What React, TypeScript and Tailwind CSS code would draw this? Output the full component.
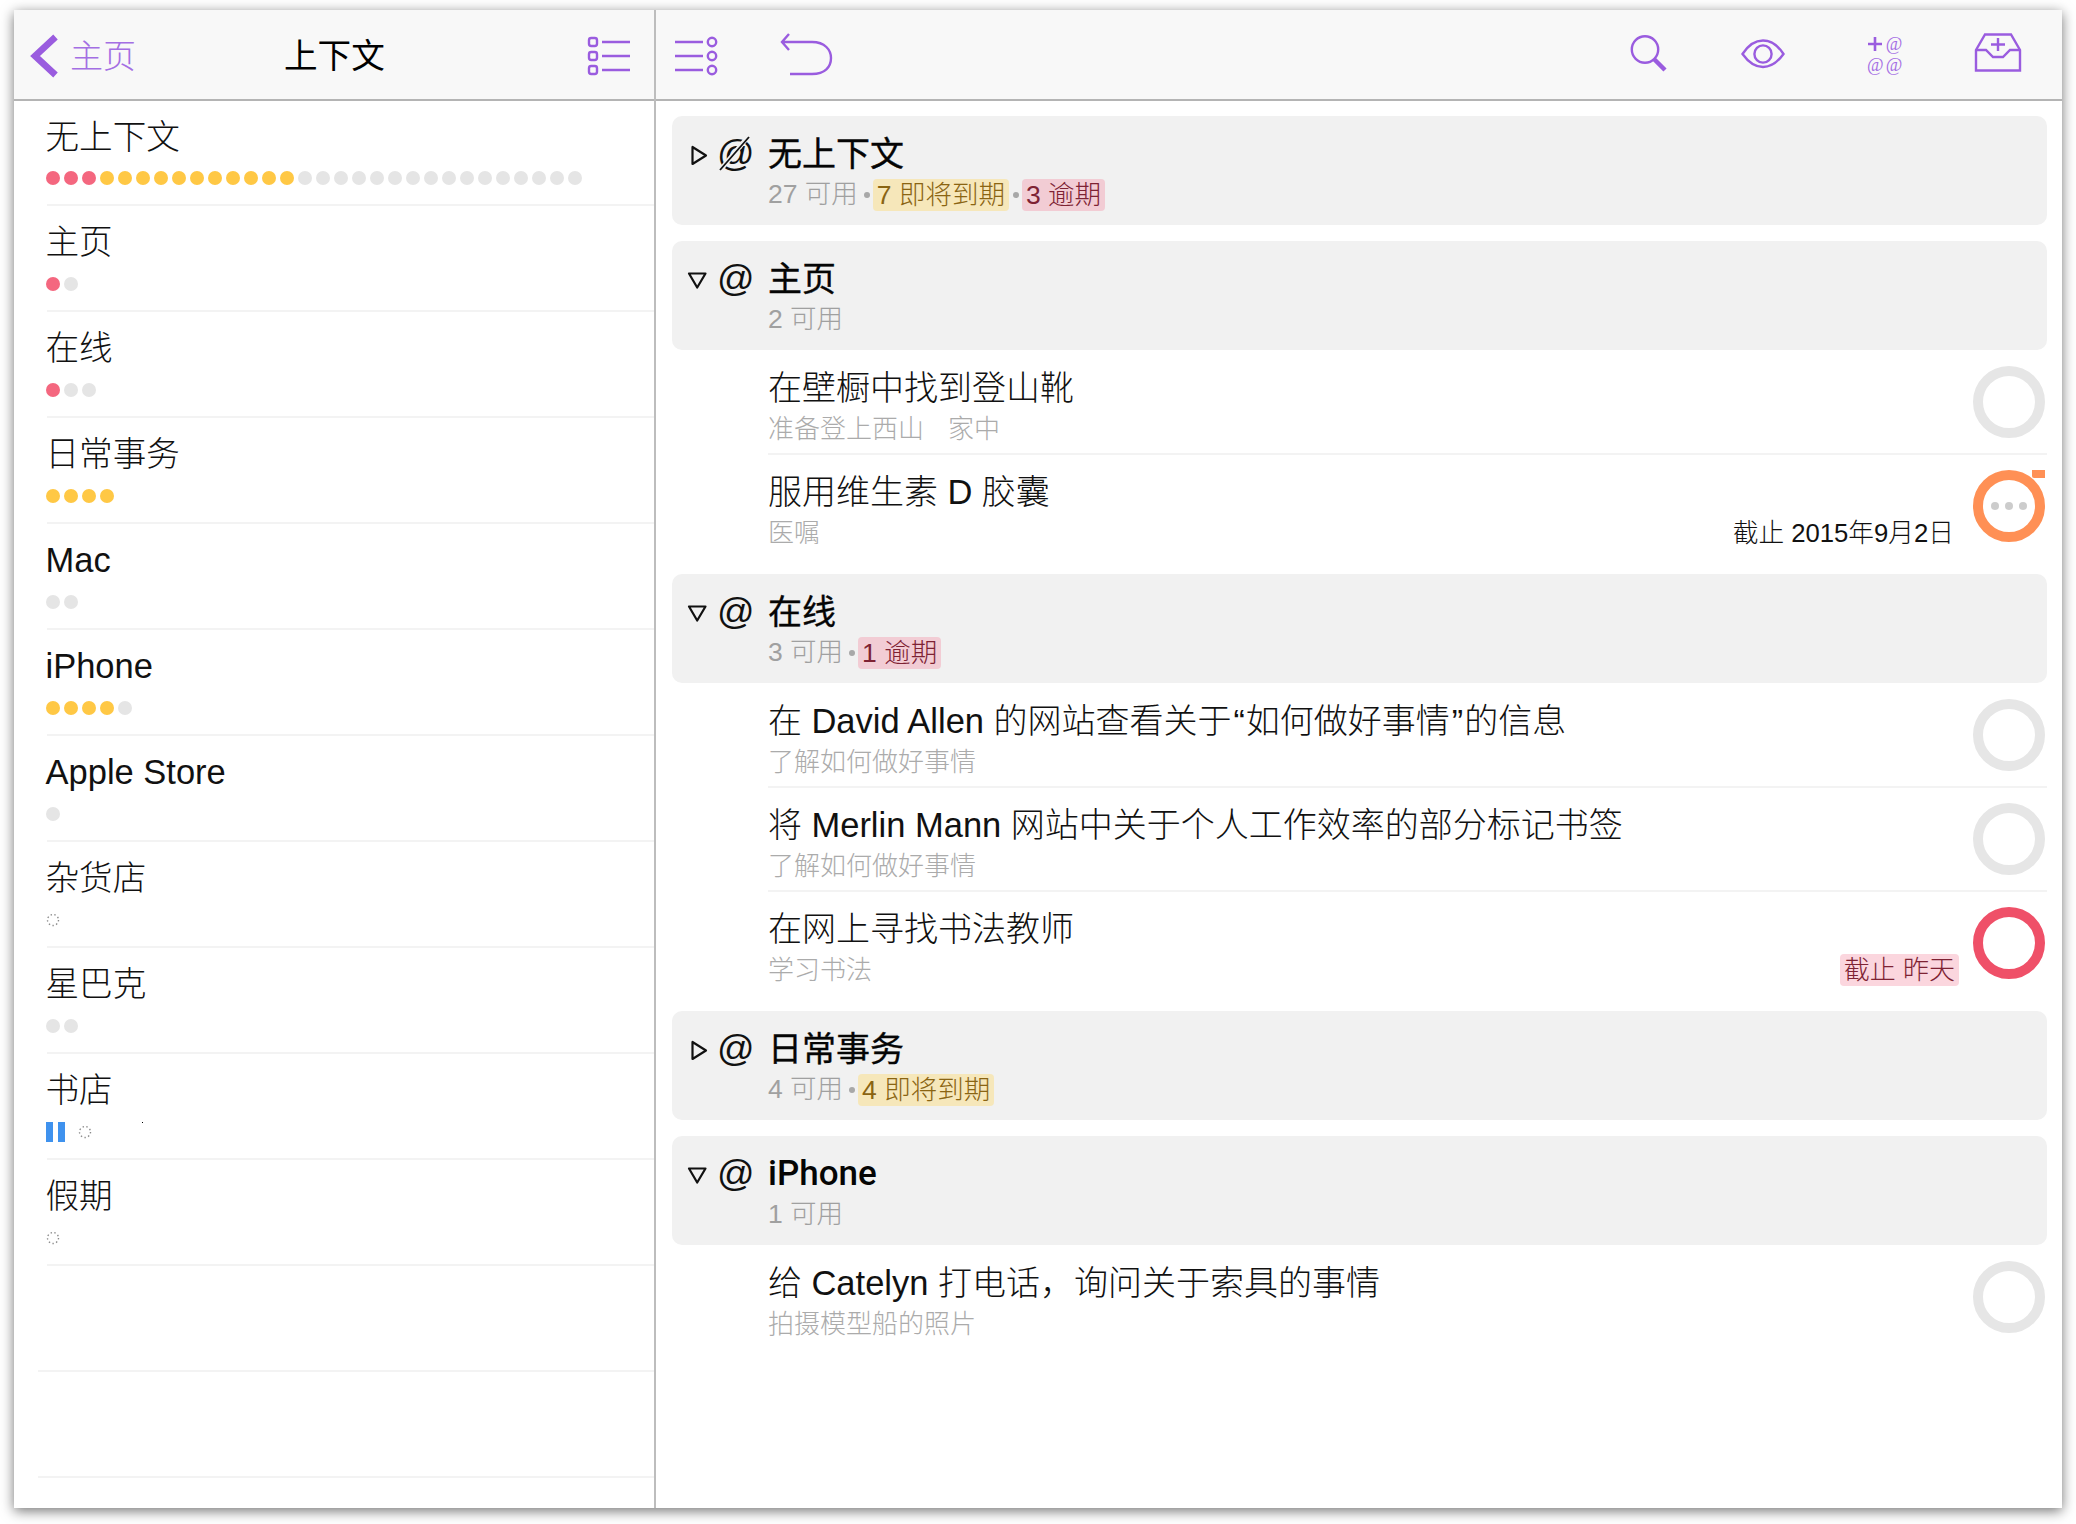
import React from "react";

const P = "#9a5cdf";

function DottedCircle() {
  return (
    <svg width="14" height="14" viewBox="0 0 14 14">
      <circle cx="7" cy="7" r="5.5" fill="none" stroke="#8a8a8a" strokeWidth="1.4" strokeDasharray="1.4 2.4" />
    </svg>
  );
}

function Dots({ r = 0, y = 0, g = 0 }: { r?: number; y?: number; g?: number }) {
  const list = [
    ...Array(r).fill("r"),
    ...Array(y).fill("y"),
    ...Array(g).fill("g"),
  ];
  return (
    <div className="flex gap-[4px] ml-[-1px]">
      {list.map((c, i) => (
        <span
          key={i}
          className={
            "w-[14px] h-[14px] rounded-full " +
            (c === "r" ? "bg-[#f4677f]" : c === "y" ? "bg-[#ffc845]" : "bg-[#e5e5e5]")
          }
        />
      ))}
    </div>
  );
}

function SideRow({ name, children, first, latin }: { name: string; children?: React.ReactNode; first?: boolean; latin?: boolean }) {
  return (
    <div className={"ml-[33px] border-b-2 border-[#f3f3f3] relative " + (first ? "h-[105px]" : "h-[106px]")}>
      <div
        className={
          "ml-[-1.5px] leading-[40px] text-[#111] " +
          (latin ? "text-[34.5px] pt-[16px] h-[57px]" : first ? "text-[33.6px] pt-[16.5px] h-[56px]" : "text-[33.6px] pt-[17px] h-[57px]")
        }
      >
        {name}
      </div>
      <div className="h-[14px] mt-[14px] flex items-center">{children}</div>
    </div>
  );
}

function GroupIcon({ open, off }: { open: boolean; off?: boolean }) {
  return (
    <div className="flex items-start shrink-0">
      <svg width="26" height="60" viewBox="0 0 26 60" className="ml-[14px] mt-[28px]">
        {open ? (
          <path d="M3 4.5 H19.5 L11.2 18.5 Z" fill="none" stroke="#111" strokeWidth="2.2" strokeLinejoin="round" />
        ) : (
          <path d="M6.5 3 V20 L20 11.5 Z" fill="none" stroke="#111" strokeWidth="2.2" strokeLinejoin="round" />
        )}
      </svg>
      <div className="relative ml-[5px] mt-[16px] w-[34px] h-[44px] text-center text-[37px] leading-[44px] text-[#111] font-['Liberation_Sans',sans-serif]">
        @
        {off && (
          <svg width="34" height="44" viewBox="0 0 34 44" className="absolute left-0 top-0">
            <path d="M5 36 L30 6" stroke="#f1f1f1" strokeWidth="5" />
            <path d="M3 38 L32 5" stroke="#111" strokeWidth="1.8" />
          </svg>
        )}
      </div>
    </div>
  );
}

function Sep({ first }: { first?: boolean }) {
  return (
    <span
      className={
        "w-[6px] h-[6px] rounded-full bg-[#a8a8a8] shrink-0 " +
        (first ? "ml-[6px] mr-[3px]" : "ml-[4px] mr-[3px]")
      }
    />
  );
}
function Badge({ kind, children }: { kind: "y" | "r"; children: React.ReactNode }) {
  return (
    <span
      className={
        "h-[32px] leading-[32px] px-[4px] rounded-[4px] " +
        (kind === "y" ? "bg-[#f6e7ba] text-[#8a6412]" : "bg-[#f2ccd4] text-[#7e2233]")
      }
    >
      {children}
    </span>
  );
}

function Group({ title, open, off, sub, latin, children }: { title: string; open: boolean; off?: boolean; sub: string; latin?: boolean; children?: React.ReactNode }) {
  return (
    <div className="h-[109px] rounded-[10px] bg-[#f1f1f1] flex">
      <GroupIcon open={open} off={off} />
      <div className="ml-[17px] pt-[18px]">
        <div
          className={
            "h-[40px] leading-[40px] text-[#050505] font-['Roboto','Noto_Sans_CJK_SC',sans-serif] " +
            (latin ? "text-[35px] font-medium" : "text-[34px] font-normal [-webkit-text-stroke:0.35px_#050505]")
          }
        >
          {title}
        </div>
        <div className="mt-[5px] h-[32px] flex items-center text-[26.5px] text-[#a0a0a0] font-light">
          <span>{sub}</span>
          {children}
        </div>
      </div>
    </div>
  );
}

function Circle({ kind = "n" }: { kind?: "n" | "o" | "r" }) {
  const c = kind === "o" ? "border-[#ff9055]" : kind === "r" ? "border-[#ef5068]" : "border-[#e6e6e6]";
  return (
    <div className={"relative w-[72px] h-[72px] rounded-full border-[10px] mt-[16px] ml-[14px] shrink-0 flex items-center justify-center gap-[6px] " + c}>
      {kind === "o" && (
        <>
          <span className="w-[8px] h-[8px] rounded-full bg-[#cccccc]" />
          <span className="w-[8px] h-[8px] rounded-full bg-[#cccccc]" />
          <span className="w-[8px] h-[8px] rounded-full bg-[#cccccc]" />
          <span className="absolute right-[-10px] top-[-10px] w-[13px] h-[8px] bg-[#ff9055] rounded-bl-[2px]" />
        </>
      )}
    </div>
  );
}

function L({ children }: { children: React.ReactNode }) {
  return <span className="text-[34.5px]">{children}</span>;
}

function Task({
  title,
  sub,
  sub2,
  right,
  circle,
  last,
}: {
  title: React.ReactNode;
  sub: string;
  sub2?: string;
  right?: React.ReactNode;
  circle?: "n" | "o" | "r";
  last?: boolean;
}) {
  return (
    <div className={"ml-[96px] flex " + (last ? "h-[104px]" : "h-[105px] mb-[-1px] border-b-2 border-[#f3f3f3]")}>
      <div className="pt-[18px] flex-1 whitespace-nowrap">
        <div className="h-[40px] text-[34px] leading-[40px] text-[#111]">{title}</div>
        <div className="mt-[5px] h-[32px] leading-[32px] text-[26px] text-[#ababab] flex gap-[24px]">
          <span>{sub}</span>
          {sub2 && <span>{sub2}</span>}
        </div>
      </div>
      {right}
      <div className="pr-[2px] flex"><Circle kind={circle} /></div>
    </div>
  );
}

export default function App() {
  return (
    <div className="w-[2076px] h-[1524px] bg-white overflow-hidden pt-[10px] pl-[14px] font-light font-['Liberation_Sans','Noto_Sans_CJK_SC',sans-serif]">
      <div className="w-[2048px] h-[1498px] bg-white shadow-[0_3px_12px_rgba(0,0,0,0.55)] flex">
        {/* Sidebar */}
        <div className="w-[642px] shrink-0 border-r-2 border-[#bdbdbd]">
          <div className="h-[91px] bg-[#f8f8f8] border-b-2 border-[#b4b4b4] flex items-start">
            <svg width="46" height="90" viewBox="14 10 46 90" fill="none" stroke={P} className="shrink-0">
              <path d="M55.5 37 L35 56 L55.5 75" strokeWidth="6.6" />
            </svg>
            <span className="ml-[10px] mt-[27px] text-[33px] leading-[40px] text-[#a46fe3]">主页</span>
            <span className="ml-[148px] mt-[27px] text-[33.6px] leading-[40px] text-black font-normal">上下文</span>
            <svg width="60" height="90" viewBox="580 10 60 90" fill="none" stroke={P} strokeWidth="2.4" className="ml-[195px] shrink-0">
              <rect x="589" y="38" width="8" height="8" rx="2.2" />
              <rect x="589" y="52" width="8" height="8" rx="2.2" />
              <rect x="589" y="66" width="8" height="8" rx="2.2" />
              <path d="M602 42 H630 M602 56 H630 M602 70 H630" />
            </svg>
          </div>
          <SideRow name="无上下文" first><Dots r={3} y={11} g={16} /></SideRow>
          <SideRow name="主页"><Dots r={1} g={1} /></SideRow>
          <SideRow name="在线"><Dots r={1} g={2} /></SideRow>
          <SideRow name="日常事务"><Dots y={4} /></SideRow>
          <SideRow name="Mac" latin><Dots g={2} /></SideRow>
          <SideRow name="iPhone" latin><Dots y={4} g={1} /></SideRow>
          <SideRow name="Apple Store" latin><Dots g={1} /></SideRow>
          <SideRow name="杂货店"><span className="ml-[-1px]"><DottedCircle /></span></SideRow>
          <SideRow name="星巴克"><Dots g={2} /></SideRow>
          <SideRow name="书店">
            <div className="flex items-center ml-[-1px]">
              <span className="w-[7px] h-[20px] bg-[#3f92ee]" />
              <span className="w-[7px] h-[20px] bg-[#3f92ee] ml-[5px]" />
              <span className="ml-[13px]"><DottedCircle /></span>
            </div>
            <span className="absolute left-[95px] top-[68px] w-[1px] h-[1px] bg-black" />
          </SideRow>
          <SideRow name="假期"><span className="ml-[-1px]"><DottedCircle /></span></SideRow>
          <div className="ml-[24px] h-[106px] border-b-2 border-[#f3f3f3]" />
          <div className="ml-[24px] h-[106px] border-b-2 border-[#f3f3f3]" />
        </div>

        {/* Main */}
        <div className="flex-1 min-w-0">
          <div className="h-[91px] bg-[#f8f8f8] border-b-2 border-[#b4b4b4] flex items-start">
            <svg width="60" height="90" viewBox="666 10 60 90" fill="none" stroke={P} strokeWidth="2.4" className="ml-[10px] shrink-0">
              <path d="M675 42 H703 M675 56 H703 M675 70 H703" />
              <circle cx="712" cy="42" r="4.2" />
              <circle cx="712" cy="56" r="4.2" />
              <circle cx="712" cy="70" r="4.2" />
            </svg>
            <svg width="60" height="90" viewBox="776 10 60 90" fill="none" stroke={P} strokeWidth="2.4" className="ml-[50px] shrink-0">
              <path d="M789 34 L782 42 L789 50 M782 42 H812 C825 42 831 50 831 58 C831 67 825 74 812 74 H790" />
            </svg>
            <svg width="50" height="90" viewBox="1625 10 50 90" fill="none" stroke={P} strokeWidth="2.4" className="ml-[789px] shrink-0">
              <circle cx="1645" cy="49.5" r="13.2" />
              <path d="M1654 59 L1665 70" strokeWidth="4.5" />
            </svg>
            <svg width="52" height="90" viewBox="1737 10 52 90" fill="none" stroke={P} strokeWidth="2.4" className="ml-[62px] shrink-0">
              <path d="M1742.5 54 C1749 44 1756 40.5 1763 40.5 C1770 40.5 1777 44 1783.5 54 C1777 63 1770 67 1763 67 C1756 67 1749 63 1742.5 54 Z" />
              <circle cx="1763" cy="54" r="8.6" />
            </svg>
            <div className="ml-[78px] mt-[24px] w-[36px] grid grid-cols-2 shrink-0 text-[#a56fe4] text-[18px] leading-[21px] font-['Liberation_Serif',serif] font-normal text-center">
              <svg width="16" height="21" viewBox="0 0 16 21" fill="none" stroke={P} strokeWidth="2.6">
                <path d="M1 10 H15 M8 3 V17" />
              </svg>
              <span>@</span>
              <span className="w-[16px]">@</span>
              <span>@</span>
            </div>
            <svg width="56" height="90" viewBox="1970 10 56 90" fill="none" stroke={P} strokeWidth="2.4" className="ml-[67px] shrink-0">
              <path d="M1976 50 L1985 34.5 H2011 L2020 50 V70.5 H1976 Z" />
              <path d="M1976 50 H1986 L1993 57 H2003 L2010 50 H2020" />
              <path d="M1998 38 V51 M1991 44.5 H2005" />
            </svg>
          </div>
          <div className="pt-[15px] pl-[16px] pr-[15px]">
            <Group title="无上下文" open={false} off sub="27 可用">
              <Sep first />
              <Badge kind="y">7 即将到期</Badge>
              <Sep />
              <Badge kind="r">3 逾期</Badge>
            </Group>
            <div className="h-[16px]" />
            <Group title="主页" open sub="2 可用" />
            <Task title="在壁橱中找到登山靴" sub="准备登上西山" sub2="家中" />
            <Task
              title={<>服用维生素 <L>D</L> 胶囊</>}
              sub="医嘱"
              circle="o"
              right={<span className="mt-[63px] h-[32px] leading-[32px] text-[25.7px] text-[#111] mr-[5px]">截止 2015年9月2日</span>}
              last
            />
            <div className="h-[16px]" />
            <Group title="在线" open sub="3 可用">
              <Sep first />
              <Badge kind="r">1 逾期</Badge>
            </Group>
            <Task
              title={<>在 <L>David Allen</L> 的网站查看关于<span className="pl-[2px] pr-[1px]">“</span>如何做好事情<span className="pl-[2px] pr-[1px]">”</span>的信息</>}
              sub="了解如何做好事情"
            />
            <Task title={<>将 <L>Merlin Mann</L> 网站中关于个人工作效率的部分标记书签</>} sub="了解如何做好事情" />
            <Task
              title="在网上寻找书法教师"
              sub="学习书法"
              circle="r"
              right={<span className="mt-[63px] h-[32px] leading-[32px] px-[4px] rounded-[4px] text-[26px] bg-[#fbd6de] text-[#7e2233]">截止 昨天</span>}
              last
            />
            <div className="h-[16px]" />
            <Group title="日常事务" open={false} sub="4 可用">
              <Sep first />
              <Badge kind="y">4 即将到期</Badge>
            </Group>
            <div className="h-[16px]" />
            <Group title="iPhone" latin open sub="1 可用" />
            <Task title={<>给 <L>Catelyn</L> 打电话，询问关于索具的事情</>} sub="拍摄模型船的照片" last />
          </div>
        </div>
      </div>
    </div>
  );
}
